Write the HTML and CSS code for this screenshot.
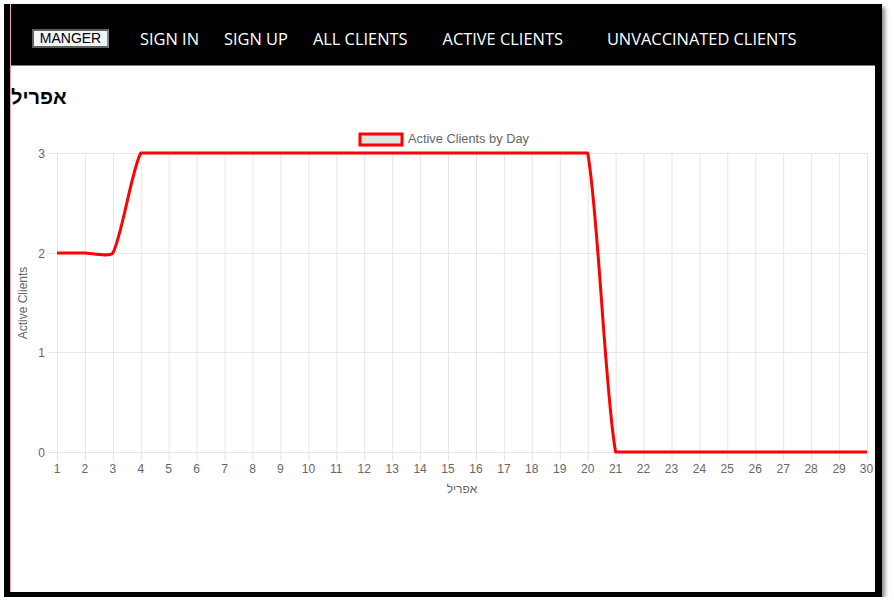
FILE: index.html
```html
<!DOCTYPE html>
<html lang="en">
<head>
<meta charset="utf-8">
<title>Active Clients</title>
<link rel="stylesheet" href="styles.css">
</head>
<body>
<div class="frame">
  <div class="page">
    <nav class="nav">
      <button class="mgr-btn">MANGER</button>
      <a class="nav-link gap-first">SIGN IN</a>
      <a class="nav-link">SIGN UP</a>
      <a class="nav-link">ALL CLIENTS</a>
      <a class="nav-link gap-wide">ACTIVE CLIENTS</a>
      <a class="nav-link gap-wider">UNVACCINATED CLIENTS</a>
    </nav>
    <main class="content">
      <h2 class="month-title">אפריל</h2>
      <svg class="chart" width="864" height="477" viewBox="0 0 864 477" xmlns="http://www.w3.org/2000/svg">
        <!-- legend -->
        <rect x="349" y="19" width="42" height="11" fill="#e3e3e3" stroke="#ff0000" stroke-width="3"/>
        <text class="lbl legend-text" x="397" y="28">Active Clients by Day</text>
        <!-- horizontal grid -->
        <g stroke="#e6e6e6" stroke-width="1">
          <line x1="37" y1="38.5" x2="856" y2="38.5"/>
          <line x1="37" y1="138.5" x2="856" y2="138.5"/>
          <line x1="37" y1="237.5" x2="856" y2="237.5"/>
          <line x1="37" y1="337.5" x2="856" y2="337.5"/>
        </g>
        <!-- vertical grid -->
        <g stroke="#e6e6e6" stroke-width="1">
          <line x1="46.5" y1="38" x2="46.5" y2="346"/>
          <line x1="74.4" y1="38" x2="74.4" y2="346"/>
          <line x1="102.4" y1="38" x2="102.4" y2="346"/>
          <line x1="130.3" y1="38" x2="130.3" y2="346"/>
          <line x1="158.2" y1="38" x2="158.2" y2="346"/>
          <line x1="186.2" y1="38" x2="186.2" y2="346"/>
          <line x1="214.1" y1="38" x2="214.1" y2="346"/>
          <line x1="242.0" y1="38" x2="242.0" y2="346"/>
          <line x1="269.9" y1="38" x2="269.9" y2="346"/>
          <line x1="297.9" y1="38" x2="297.9" y2="346"/>
          <line x1="325.8" y1="38" x2="325.8" y2="346"/>
          <line x1="353.7" y1="38" x2="353.7" y2="346"/>
          <line x1="381.7" y1="38" x2="381.7" y2="346"/>
          <line x1="409.6" y1="38" x2="409.6" y2="346"/>
          <line x1="437.5" y1="38" x2="437.5" y2="346"/>
          <line x1="465.5" y1="38" x2="465.5" y2="346"/>
          <line x1="493.4" y1="38" x2="493.4" y2="346"/>
          <line x1="521.3" y1="38" x2="521.3" y2="346"/>
          <line x1="549.3" y1="38" x2="549.3" y2="346"/>
          <line x1="577.2" y1="38" x2="577.2" y2="346"/>
          <line x1="605.1" y1="38" x2="605.1" y2="346"/>
          <line x1="633.0" y1="38" x2="633.0" y2="346"/>
          <line x1="661.0" y1="38" x2="661.0" y2="346"/>
          <line x1="688.9" y1="38" x2="688.9" y2="346"/>
          <line x1="716.8" y1="38" x2="716.8" y2="346"/>
          <line x1="744.8" y1="38" x2="744.8" y2="346"/>
          <line x1="772.7" y1="38" x2="772.7" y2="346"/>
          <line x1="800.6" y1="38" x2="800.6" y2="346"/>
          <line x1="828.6" y1="38" x2="828.6" y2="346"/>
          <line x1="856.5" y1="38" x2="856.5" y2="346"/>
        </g>
        <!-- y tick labels -->
        <g class="lbl" text-anchor="end">
          <text x="34" y="42.5">3</text>
          <text x="34" y="142.5">2</text>
          <text x="34" y="241.5">1</text>
          <text x="34" y="341.5">0</text>
        </g>
        <!-- x tick labels -->
        <g class="lbl" text-anchor="middle">
          <text x="46.0" y="358">1</text>
          <text x="73.9" y="358">2</text>
          <text x="101.9" y="358">3</text>
          <text x="129.8" y="358">4</text>
          <text x="157.7" y="358">5</text>
          <text x="185.7" y="358">6</text>
          <text x="213.6" y="358">7</text>
          <text x="241.5" y="358">8</text>
          <text x="269.4" y="358">9</text>
          <text x="297.4" y="358">10</text>
          <text x="325.3" y="358">11</text>
          <text x="353.2" y="358">12</text>
          <text x="381.2" y="358">13</text>
          <text x="409.1" y="358">14</text>
          <text x="437.0" y="358">15</text>
          <text x="465.0" y="358">16</text>
          <text x="492.9" y="358">17</text>
          <text x="520.8" y="358">18</text>
          <text x="548.8" y="358">19</text>
          <text x="576.7" y="358">20</text>
          <text x="604.6" y="358">21</text>
          <text x="632.5" y="358">22</text>
          <text x="660.5" y="358">23</text>
          <text x="688.4" y="358">24</text>
          <text x="716.3" y="358">25</text>
          <text x="744.3" y="358">26</text>
          <text x="772.2" y="358">27</text>
          <text x="800.1" y="358">28</text>
          <text x="828.1" y="358">29</text>
          <text x="855.5" y="358">30</text>
        </g>
        <!-- axis titles -->
        <text class="lbl" x="451" y="378" text-anchor="middle">אפריל</text>
        <text class="lbl" transform="translate(16,188) rotate(-90)" text-anchor="middle">Active Clients</text>
        <!-- data line -->
        <path fill="none" stroke="#ff0000" stroke-width="3" stroke-linejoin="round"
          d="M46,138 C51.59,138 68.34,138 73.93,138 C79.52,138 99.49,142.24 101.86,138 C110.66,122.24 120.99,53.76 129.79,38 C132.16,38 152.13,38 157.72,38 L548.76,38 C554.35,38 575.74,38 576.69,38 C586.91,92.7 594.4,282.3 604.62,337 C605.57,337 626.96,337 632.55,337 L856,337"/>
      </svg>
    </main>
  </div>
</div>
</body>
</html>
```
FILE: styles.css
```css
html, body {
  margin: 0;
  padding: 0;
  background: #ffffff;
}

.frame {
  margin: 4px 0 0 4px;
  width: 878px;
  height: 593px;
  box-sizing: border-box;
  background: #ffffff;
  border-left: 6px solid #000;
  border-right: 7px solid #000;
  border-bottom: 5px solid #000;
  box-shadow: 3px 3px 4px rgba(0, 0, 0, 0.45);
}

.page {
  height: 100%;
  border-left: 1px solid #f3a3b9;
  display: flex;
  flex-direction: column;
}

.nav {
  height: 62px;
  box-sizing: border-box;
  padding: 8px 0 0 21px;
  background: #000;
  border-bottom: 1px solid #7d7d7d;
  display: flex;
  align-items: center;
  flex-shrink: 0;
}

.mgr-btn {
  width: 77px;
  height: 19px;
  padding: 0;
  margin: 0;
  background: #f1f6fc;
  border: 2px solid #5f5f5f;
  border-right-color: #8a8a8a;
  font-family: "Liberation Sans", Arial, sans-serif;
  font-size: 14px;
  line-height: 15px;
  color: #000;
}

.nav-link {
  margin-left: 25px;
  color: #ffffff;
  font-family: "Open Sans", "Noto Sans", sans-serif;
  font-size: 16.4px;
  white-space: nowrap;
}

.gap-first { margin-left: 31px; }
.gap-wide { margin-left: 35px; }
.gap-wider { margin-left: 44px; }

.content {
  flex: 1;
  display: flex;
  flex-direction: column;
}

.month-title {
  margin: 19px 0 0 0;
  height: 30px;
  font-family: "Liberation Sans", Arial, sans-serif;
  font-size: 20px;
  font-weight: bold;
  line-height: 24px;
  color: #000;
}

.chart {
  display: block;
}

.lbl {
  font-family: "Liberation Sans", Arial, sans-serif;
  font-size: 12px;
  fill: #666666;
}

.legend-text {
  font-size: 12.8px;
}
```
